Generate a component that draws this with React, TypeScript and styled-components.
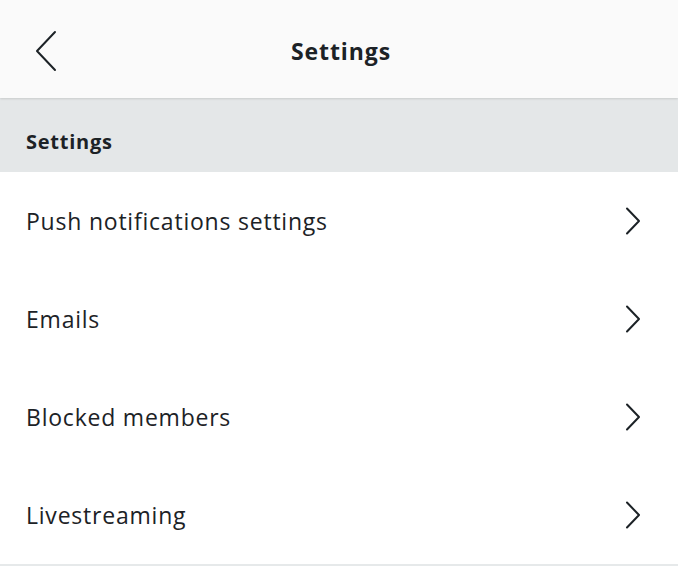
import React from 'react'
import styled, { createGlobalStyle } from 'styled-components'

const GlobalStyle = createGlobalStyle`
  html, body {
    margin: 0;
    padding: 0;
    background: #ffffff;
  }
  body {
    font-family: 'Open Sans', 'Liberation Sans', sans-serif;
    color: #1c2226;
  }
`

const items = [
  'Push notifications settings',
  'Emails',
  'Blocked members',
  'Livestreaming',
]

export default function App() {
  return (
    <>
      <GlobalStyle />
      <Page>
        <TopBar>
          <BackButton aria-label="Back">
            <svg width="22" height="42" viewBox="0 0 22 42">
              <path
                d="M20 2 L2 21 L20 40"
                fill="none"
                stroke="#1c2226"
                strokeWidth="2"
                strokeLinecap="round"
                strokeLinejoin="round"
              />
            </svg>
          </BackButton>
          <Title>Settings</Title>
        </TopBar>
        <SectionHeader>Settings</SectionHeader>
        <List>
          {items.map((label) => (
            <Row key={label}>
              <RowLabel>{label}</RowLabel>
              <svg width="16" height="28" viewBox="0 0 16 28">
                <path
                  d="M2 1.5 L14 14 L2 26.5"
                  fill="none"
                  stroke="#1c2226"
                  strokeWidth="2"
                  strokeLinecap="round"
                  strokeLinejoin="round"
                />
              </svg>
            </Row>
          ))}
        </List>
      </Page>
    </>
  )
}

const Page = styled.div`
  width: 678px;
  min-height: 566px;
  background: #ffffff;
`

const TopBar = styled.header`
  position: relative;
  height: 98px;
  box-sizing: border-box;
  padding-top: 4px;
  background: #fafafa;
  display: flex;
  align-items: center;
  justify-content: center;
  box-shadow: 0 1px 2px rgba(0, 0, 0, 0.12);
  z-index: 1;
`

const BackButton = styled.button`
  position: absolute;
  left: 35px;
  top: 30px;
  padding: 0;
  border: none;
  background: none;
  display: flex;
`

const Title = styled.h1`
  margin: 0 0 0 4px;
  font-size: 23px;
  font-weight: 700;
  color: #1c2226;
  letter-spacing: 0.9px;
`

const SectionHeader = styled.div`
  height: 74px;
  box-sizing: border-box;
  display: flex;
  align-items: center;
  padding: 12px 26px 0;
  background: #e4e7e8;
  font-size: 20px;
  font-weight: 700;
  color: #1c2226;
  letter-spacing: 0.75px;
`

const List = styled.div`
  display: flex;
  flex-direction: column;
  border-bottom: 2px solid #e6e9ea;
`

const Row = styled.div`
  height: 98px;
  display: flex;
  align-items: center;
  justify-content: space-between;
  padding: 0 37px 0 26px;
`

const RowLabel = styled.span`
  font-size: 23px;
  font-weight: 400;
  color: #1c2226;
  letter-spacing: 0.78px;
`
